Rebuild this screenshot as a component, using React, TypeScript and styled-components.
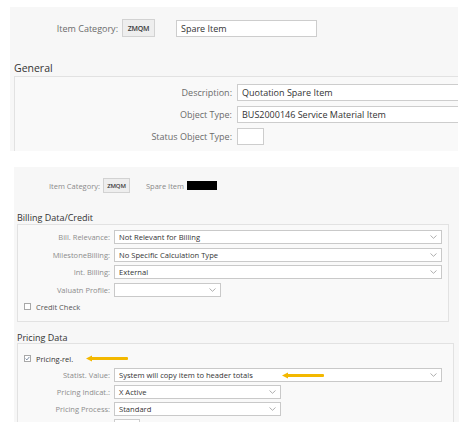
import React from 'react'
import styled, { createGlobalStyle } from 'styled-components'

const GlobalStyle = createGlobalStyle`
  html, body {
    margin: 0;
    padding: 0;
    background: #ffffff;
  }
  body {
    font-family: "Open Sans", "Liberation Sans", Arial, sans-serif;
    color: #333333;
  }
`

const Page = styled.div`
  width: 474px;
  height: 430px;
  overflow: hidden;
  display: flex;
  flex-direction: column;
`

const Panel = styled.div<{ $top: number; $left: number; $right: number; $height?: number }>`
  margin: ${({ $top, $left, $right }) => `${$top}px ${$right}px 0 ${$left}px`};
  background: #f7f7f7;
  overflow: hidden;
  display: flex;
  flex-direction: column;
  flex-shrink: 0;
  ${({ $height }) => ($height ? `height: ${$height}px;` : '')}
`

const HeaderRow = styled.div<{ $pad: number; $h: number }>`
  display: flex;
  align-items: center;
  height: ${({ $h }) => $h}px;
  margin-top: ${({ $pad }) => $pad}px;
`

const HeaderLabel = styled.div<{ $w: number; $size: number; $color: string }>`
  width: ${({ $w }) => $w}px;
  text-align: right;
  font-size: ${({ $size }) => $size}px;
  color: ${({ $color }) => $color};
  white-space: nowrap;
`

const CodeBox = styled.div<{ $w: number; $h: number; $gap: number; $size: number }>`
  box-sizing: border-box;
  width: ${({ $w }) => $w}px;
  height: ${({ $h }) => $h}px;
  margin-left: ${({ $gap }) => $gap}px;
  background: #eeeeee;
  border: 1px solid #d2d2d2;
  font-size: ${({ $size }) => $size}px;
  font-weight: 600;
  color: #3a3a3a;
  display: flex;
  align-items: center;
  justify-content: center;
  letter-spacing: -0.2px;
`

const TextInput = styled.div<{ $w: number; $h: number; $size: number; $gap?: number }>`
  box-sizing: border-box;
  width: ${({ $w }) => $w}px;
  height: ${({ $h }) => $h}px;
  margin-left: ${({ $gap }) => $gap ?? 0}px;
  flex-shrink: 0;
  background: #ffffff;
  border: 1px solid #cdcdcd;
  padding-left: 4px;
  font-size: ${({ $size }) => $size}px;
  color: #333333;
  display: flex;
  align-items: center;
  white-space: nowrap;
`

const PlainText = styled.span`
  margin-left: 16px;
  font-size: 7.5px;
  color: #8a8a8a;
`

const Redacted = styled.span`
  display: inline-block;
  width: 30px;
  height: 9px;
  margin-left: 3px;
  background: #000000;
`

const Heading = styled.div<{ $size: number; $top: number; $left: number; $lh: number }>`
  margin: ${({ $top, $left }) => `${$top}px 0 0 ${$left}px`};
  font-size: ${({ $size }) => $size}px;
  line-height: ${({ $lh }) => $lh}px;
  height: ${({ $lh }) => $lh}px;
  color: #333333;
`

const Section = styled.div<{ $left: number; $width?: number; $padTop: number; $padBottom: number; $gap: number; $open?: boolean }>`
  margin-left: ${({ $left }) => $left}px;
  ${({ $width }) => ($width ? `width: ${$width}px;` : '')}
  flex-shrink: 0;
  background: #f9f9f9;
  border: 1px solid #e2e2e2;
  ${({ $open }) => ($open ? 'border-right: none; border-bottom: none;' : '')}
  padding: ${({ $padTop, $padBottom }) => `${$padTop}px 0 ${$padBottom}px 0`};
  display: flex;
  flex-direction: column;
  gap: ${({ $gap }) => $gap}px;
`

const FieldRow = styled.div<{ $h: number }>`
  display: flex;
  align-items: center;
  height: ${({ $h }) => $h}px;
  flex-shrink: 0;
`

const FieldLabel = styled.div<{ $w: number; $size: number; $color: string; $gap: number }>`
  width: ${({ $w }) => $w}px;
  margin-right: ${({ $gap }) => $gap}px;
  flex-shrink: 0;
  text-align: right;
  font-size: ${({ $size }) => $size}px;
  color: ${({ $color }) => $color};
  white-space: nowrap;
`

const Select = styled.div<{ $w: number }>`
  box-sizing: border-box;
  width: ${({ $w }) => $w}px;
  height: 14px;
  flex-shrink: 0;
  background: #ffffff;
  border: 1px solid #c9c9c9;
  padding: 0 4px 0 4px;
  display: flex;
  align-items: center;
  font-size: 7.6px;
  color: #333333;
  white-space: nowrap;
`

const SelectValue = styled.span`
  flex: 1;
  display: flex;
  align-items: center;
`

const CheckRow = styled.div`
  display: flex;
  align-items: center;
  height: 13px;
  padding-left: 6px;
  flex-shrink: 0;
`

const CheckBox = styled.div`
  box-sizing: border-box;
  width: 7px;
  height: 7px;
  border: 1px solid #a8a8a8;
  background: #ffffff;
  display: flex;
  align-items: center;
  justify-content: center;
`

const CheckText = styled.span<{ $color: string }>`
  margin-left: 5px;
  font-size: 7.5px;
  color: ${({ $color }) => $color};
`

const ArrowMark = styled.svg<{ $gap: number }>`
  margin-left: ${({ $gap }) => $gap}px;
  flex-shrink: 0;
`

function Chevron() {
  return (
    <svg width="7" height="4" viewBox="0 0 7 4">
      <polyline points="0.5,0.5 3.5,3.3 6.5,0.5" fill="none" stroke="#9a9a9a" strokeWidth="0.8" />
    </svg>
  )
}

function Arrow({ gap }: { gap: number }) {
  return (
    <ArrowMark $gap={gap} width="42" height="7" viewBox="0 0 42 7">
      <polygon points="0,3.5 6,0.5 6,6.5" fill="#f3b800" />
      <rect x="5" y="2" width="37" height="3" rx="1" fill="#f3b800" />
    </ArrowMark>
  )
}

function DropDown({ w, value, children }: { w: number; value?: string; children?: React.ReactNode }) {
  return (
    <Select $w={w}>
      <SelectValue>
        {value}
        {children}
      </SelectValue>
      <Chevron />
    </Select>
  )
}

function BillingRow({ label, w, value }: { label: string; w: number; value?: string }) {
  return (
    <FieldRow $h={14}>
      <FieldLabel $w={92} $gap={4} $size={7.5} $color="#8c8c8c">{label}</FieldLabel>
      <DropDown w={w} value={value} />
    </FieldRow>
  )
}

export default function App() {
  return (
    <Page>
      <GlobalStyle />

      <Panel $top={7} $left={10} $right={16}>
        <HeaderRow $pad={12} $h={18}>
          <HeaderLabel $w={108} $size={9} $color="#6b6b6b">Item Category:</HeaderLabel>
          <CodeBox $w={33} $h={18} $gap={4} $size={7}>ZMQM</CodeBox>
          <TextInput $w={141} $h={17} $size={9} $gap={21}>Spare Item</TextInput>
        </HeaderRow>

        <Heading $size={10.5} $top={24} $left={4} $lh={15}>General</Heading>

        <Section $left={4} $width={460} $padTop={7} $padBottom={6} $gap={5} $open>
          <FieldRow $h={17}>
            <FieldLabel $w={217} $gap={5} $size={9} $color="#6b6b6b">Description:</FieldLabel>
            <TextInput $w={240} $h={17} $size={9}>Quotation Spare Item</TextInput>
          </FieldRow>
          <FieldRow $h={17}>
            <FieldLabel $w={217} $gap={5} $size={9} $color="#6b6b6b">Object Type:</FieldLabel>
            <TextInput $w={240} $h={17} $size={9}>BUS2000146 Service Material Item</TextInput>
          </FieldRow>
          <FieldRow $h={17}>
            <FieldLabel $w={217} $gap={5} $size={9} $color="#6b6b6b">Status Object Type:</FieldLabel>
            <TextInput $w={27} $h={17} $size={9} />
          </FieldRow>
        </Section>
      </Panel>

      <Panel $top={16} $left={14} $right={15} $height={255}>
        <HeaderRow $pad={11} $h={15}>
          <HeaderLabel $w={86} $size={7.5} $color="#8a8a8a">Item Category:</HeaderLabel>
          <CodeBox $w={27} $h={15} $gap={3} $size={6}>ZMQM</CodeBox>
          <PlainText>Spare Item</PlainText>
          <Redacted />
        </HeaderRow>

        <Heading $size={9} $top={18} $left={3} $lh={13}>Billing Data/Credit</Heading>

        <Section $left={3} $width={430} $padTop={5} $padBottom={8} $gap={3.5}>
          <BillingRow label="Bill. Relevance:" w={328} value="Not Relevant for Billing" />
          <BillingRow label="MilestoneBilling:" w={328} value="No Specific Calculation Type" />
          <BillingRow label="Int. Billing:" w={328} value="External" />
          <BillingRow label="Valuatn Profile:" w={107} />
          <CheckRow>
            <CheckBox />
            <CheckText $color="#555555">Credit Check</CheckText>
          </CheckRow>
        </Section>

        <Heading $size={9} $top={10} $left={3} $lh={11}>Pricing Data</Heading>

        <Section $left={3} $width={435} $padTop={8} $padBottom={0} $gap={3}>
          <CheckRow>
            <CheckBox>
              <svg width="5" height="5" viewBox="0 0 5 5">
                <polyline points="0.6,2.6 1.9,3.9 4.4,0.9" fill="none" stroke="#5a6f8a" strokeWidth="0.8" />
              </svg>
            </CheckBox>
            <CheckText $color="#333333">Pricing-rel.</CheckText>
            <Arrow gap={13} />
          </CheckRow>
          <FieldRow $h={14}>
            <FieldLabel $w={92} $gap={4} $size={7.5} $color="#8c8c8c">Statist. Value:</FieldLabel>
            <DropDown w={328}>
              System will copy item to header totals
              <Arrow gap={29} />
            </DropDown>
          </FieldRow>
          <BillingRow label="Pricing Indicat.:" w={167} value="X Active" />
          <BillingRow label="Pricing Process:" w={167} value="Standard" />
          <FieldRow $h={14}>
            <FieldLabel $w={92} $gap={4} $size={7.5} $color="#8c8c8c"></FieldLabel>
            <TextInput $w={26} $h={14} $size={7.5} />
          </FieldRow>
        </Section>
      </Panel>
    </Page>
  )
}
